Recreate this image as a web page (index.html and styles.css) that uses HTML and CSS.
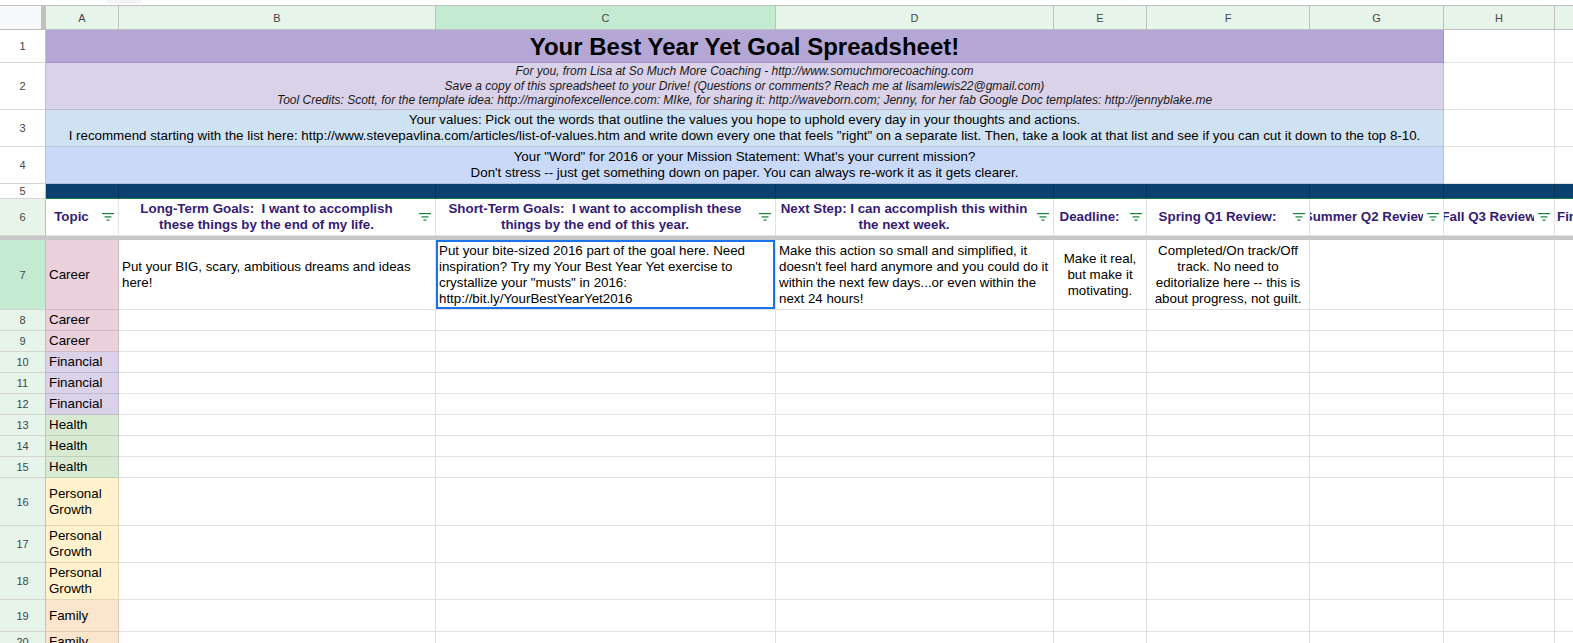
FILE: index.html
```html
<!DOCTYPE html>
<html>
<head>
<meta charset="utf-8">
<link rel="stylesheet" href="styles.css">
</head>
<body>
<div class="topstrip"><div class="tab"></div></div>
<div class="sheet">
  <!-- column headers -->
  <div class="corner"></div>
  <div class="colhdr">A</div>
  <div class="colhdr">B</div>
  <div class="colhdr sel">C</div>
  <div class="colhdr">D</div>
  <div class="colhdr">E</div>
  <div class="colhdr">F</div>
  <div class="colhdr">G</div>
  <div class="colhdr">H</div>
  <div class="colhdr">I</div>

  <!-- row 1 -->
  <div class="rowhdr">1</div>
  <div class="cell merged r1"><span class="title">Your Best Year Yet Goal Spreadsheet!</span></div>
  <div class="cell"></div>
  <div class="cell"></div>

  <!-- row 2 -->
  <div class="rowhdr">2</div>
  <div class="cell merged r2"><span class="small">For you, from Lisa at So Much More Coaching - http://www.somuchmorecoaching.com<br>Save a copy of this spreadsheet to your Drive! (Questions or comments? Reach me at lisamlewis22@gmail.com)<br>Tool Credits: Scott, for the template idea: http://marginofexcellence.com: MIke, for sharing it: http://waveborn.com; Jenny, for her fab Google Doc templates: http://jennyblake.me</span></div>
  <div class="cell"></div>
  <div class="cell"></div>

  <!-- row 3 -->
  <div class="rowhdr">3</div>
  <div class="cell merged r3"><span>Your values: Pick out the words that outline the values you hope to uphold every day in your thoughts and actions.<br>I recommend starting with the list here: http://www.stevepavlina.com/articles/list-of-values.htm and write down every one that feels "right" on a separate list. Then, take a look at that list and see if you can cut it down to the top 8-10.</span></div>
  <div class="cell"></div>
  <div class="cell"></div>

  <!-- row 4 -->
  <div class="rowhdr">4</div>
  <div class="cell merged r4"><span>Your "Word" for 2016 or your Mission Statement: What's your current mission?<br>Don't stress -- just get something down on paper. You can always re-work it as it gets clearer.</span></div>
  <div class="cell"></div>
  <div class="cell"></div>

  <!-- row 5 -->
  <div class="rowhdr">5</div>
  <div class="cell dark"></div>
  <div class="cell dark"></div>
  <div class="cell dark"></div>
  <div class="cell dark"></div>
  <div class="cell dark"></div>
  <div class="cell dark"></div>
  <div class="cell dark"></div>
  <div class="cell dark"></div>
  <div class="cell dark"></div>

  <!-- row 6 -->
  <div class="rowhdr tinted">6</div>
  <div class="cell hdr"><div class="htext"><span>Topic</span></div><span class="filter"><svg width="12" height="8" viewBox="0 0 12 8"><rect x="0" y="0" width="12" height="1.2" fill="#188038"/><rect x="2.5" y="3.3" width="7" height="1.2" fill="#188038"/><rect x="4.5" y="6.5" width="3" height="1.2" fill="#188038"/></svg></span></div>
  <div class="cell hdr"><div class="htext"><span>Long-Term Goals:&nbsp; I want to accomplish<br>these things by the end of my life.</span></div><span class="filter"><svg width="12" height="8" viewBox="0 0 12 8"><rect x="0" y="0" width="12" height="1.2" fill="#188038"/><rect x="2.5" y="3.3" width="7" height="1.2" fill="#188038"/><rect x="4.5" y="6.5" width="3" height="1.2" fill="#188038"/></svg></span></div>
  <div class="cell hdr"><div class="htext"><span>Short-Term Goals:&nbsp; I want to accomplish these<br>things by the end of this year.</span></div><span class="filter"><svg width="12" height="8" viewBox="0 0 12 8"><rect x="0" y="0" width="12" height="1.2" fill="#188038"/><rect x="2.5" y="3.3" width="7" height="1.2" fill="#188038"/><rect x="4.5" y="6.5" width="3" height="1.2" fill="#188038"/></svg></span></div>
  <div class="cell hdr"><div class="htext"><span>Next Step: I can accomplish this within<br>the next week.</span></div><span class="filter"><svg width="12" height="8" viewBox="0 0 12 8"><rect x="0" y="0" width="12" height="1.2" fill="#188038"/><rect x="2.5" y="3.3" width="7" height="1.2" fill="#188038"/><rect x="4.5" y="6.5" width="3" height="1.2" fill="#188038"/></svg></span></div>
  <div class="cell hdr"><div class="htext"><span>Deadline:</span></div><span class="filter"><svg width="12" height="8" viewBox="0 0 12 8"><rect x="0" y="0" width="12" height="1.2" fill="#188038"/><rect x="2.5" y="3.3" width="7" height="1.2" fill="#188038"/><rect x="4.5" y="6.5" width="3" height="1.2" fill="#188038"/></svg></span></div>
  <div class="cell hdr"><div class="htext"><span>Spring Q1 Review:</span></div><span class="filter"><svg width="12" height="8" viewBox="0 0 12 8"><rect x="0" y="0" width="12" height="1.2" fill="#188038"/><rect x="2.5" y="3.3" width="7" height="1.2" fill="#188038"/><rect x="4.5" y="6.5" width="3" height="1.2" fill="#188038"/></svg></span></div>
  <div class="cell hdr"><div class="htext"><span>Summer Q2 Review</span></div><span class="filter"><svg width="12" height="8" viewBox="0 0 12 8"><rect x="0" y="0" width="12" height="1.2" fill="#188038"/><rect x="2.5" y="3.3" width="7" height="1.2" fill="#188038"/><rect x="4.5" y="6.5" width="3" height="1.2" fill="#188038"/></svg></span></div>
  <div class="cell hdr"><div class="htext"><span>Fall Q3 Review</span></div><span class="filter"><svg width="12" height="8" viewBox="0 0 12 8"><rect x="0" y="0" width="12" height="1.2" fill="#188038"/><rect x="2.5" y="3.3" width="7" height="1.2" fill="#188038"/><rect x="4.5" y="6.5" width="3" height="1.2" fill="#188038"/></svg></span></div>
  <div class="cell hdr hleft"><div class="htext"><span>Final Review</span></div></div>

  <!-- freeze bar -->
  <div class="freeze"></div>

  <!-- row 7 -->
  <div class="rowhdr selrow">7</div>
  <div class="cell topic career">Career</div>
  <div class="cell body">Put your BIG, scary, ambitious dreams and ideas<br>here!</div>
  <div class="cell body active">Put your bite-sized 2016 part of the goal here. Need<br>inspiration? Try my Your Best Year Yet exercise to<br>crystallize your "musts" in 2016:<br>http://bit.ly/YourBestYearYet2016</div>
  <div class="cell body">Make this action so small and simplified, it<br>doesn't feel hard anymore and you could do it<br>within the next few days...or even within the<br>next 24 hours!</div>
  <div class="cell body center">Make it real,<br>but make it<br>motivating.</div>
  <div class="cell body center">Completed/On track/Off<br>track. No need to<br>editorialize here -- this is<br>about progress, not guilt.</div>
  <div class="cell"></div>
  <div class="cell"></div>
  <div class="cell"></div>

  <!-- rows 8..20 -->
  <div class="rowhdr tinted">8</div>
  <div class="cell topic career">Career</div>
  <div class="cell"></div><div class="cell"></div><div class="cell"></div><div class="cell"></div><div class="cell"></div><div class="cell"></div><div class="cell"></div><div class="cell"></div>

  <div class="rowhdr tinted">9</div>
  <div class="cell topic career">Career</div>
  <div class="cell"></div><div class="cell"></div><div class="cell"></div><div class="cell"></div><div class="cell"></div><div class="cell"></div><div class="cell"></div><div class="cell"></div>

  <div class="rowhdr tinted">10</div>
  <div class="cell topic financial">Financial</div>
  <div class="cell"></div><div class="cell"></div><div class="cell"></div><div class="cell"></div><div class="cell"></div><div class="cell"></div><div class="cell"></div><div class="cell"></div>

  <div class="rowhdr tinted">11</div>
  <div class="cell topic financial">Financial</div>
  <div class="cell"></div><div class="cell"></div><div class="cell"></div><div class="cell"></div><div class="cell"></div><div class="cell"></div><div class="cell"></div><div class="cell"></div>

  <div class="rowhdr tinted">12</div>
  <div class="cell topic financial">Financial</div>
  <div class="cell"></div><div class="cell"></div><div class="cell"></div><div class="cell"></div><div class="cell"></div><div class="cell"></div><div class="cell"></div><div class="cell"></div>

  <div class="rowhdr tinted">13</div>
  <div class="cell topic health">Health</div>
  <div class="cell"></div><div class="cell"></div><div class="cell"></div><div class="cell"></div><div class="cell"></div><div class="cell"></div><div class="cell"></div><div class="cell"></div>

  <div class="rowhdr tinted">14</div>
  <div class="cell topic health">Health</div>
  <div class="cell"></div><div class="cell"></div><div class="cell"></div><div class="cell"></div><div class="cell"></div><div class="cell"></div><div class="cell"></div><div class="cell"></div>

  <div class="rowhdr tinted">15</div>
  <div class="cell topic health">Health</div>
  <div class="cell"></div><div class="cell"></div><div class="cell"></div><div class="cell"></div><div class="cell"></div><div class="cell"></div><div class="cell"></div><div class="cell"></div>

  <div class="rowhdr tinted">16</div>
  <div class="cell topic growth">Personal<br>Growth</div>
  <div class="cell"></div><div class="cell"></div><div class="cell"></div><div class="cell"></div><div class="cell"></div><div class="cell"></div><div class="cell"></div><div class="cell"></div>

  <div class="rowhdr tinted">17</div>
  <div class="cell topic growth">Personal<br>Growth</div>
  <div class="cell"></div><div class="cell"></div><div class="cell"></div><div class="cell"></div><div class="cell"></div><div class="cell"></div><div class="cell"></div><div class="cell"></div>

  <div class="rowhdr tinted">18</div>
  <div class="cell topic growth">Personal<br>Growth</div>
  <div class="cell"></div><div class="cell"></div><div class="cell"></div><div class="cell"></div><div class="cell"></div><div class="cell"></div><div class="cell"></div><div class="cell"></div>

  <div class="rowhdr tinted">19</div>
  <div class="cell topic family">Family</div>
  <div class="cell"></div><div class="cell"></div><div class="cell"></div><div class="cell"></div><div class="cell"></div><div class="cell"></div><div class="cell"></div><div class="cell"></div>

  <div class="rowhdr tinted">20</div>
  <div class="cell topic family">Family</div>
  <div class="cell"></div><div class="cell"></div><div class="cell"></div><div class="cell"></div><div class="cell"></div><div class="cell"></div><div class="cell"></div><div class="cell"></div>
</div>
</body>
</html>
```

FILE: styles.css
```css
html, body {
  margin: 0;
  padding: 0;
  background: #ffffff;
  overflow: hidden;
  width: 1573px;
  height: 643px;
}

body {
  font-family: "Liberation Sans", Arial, sans-serif;
  color: #000;
}

.topstrip {
  height: 5px;
  display: flex;
}

.tab {
  margin-left: 107px;
  width: 34px;
  height: 4px;
  background: #f3f4f6;
}

.sheet {
  display: grid;
  grid-template-columns: 46px 73px 317px 340px 278px 93px 163px 134px 111px 160px;
  grid-template-rows: 25px 33px 47px 37px 37px 15px 37px 4px 70px repeat(8, 21px) 48px 37px 37px 32px 21px;
  width: 1755px;
}

.sheet > div {
  box-sizing: border-box;
  min-width: 0;
}

.corner {
  background: #f8f9fa;
  border-top: 1px solid #c0c0c0;
  border-bottom: 1px solid #c0c0c0;
  border-right: 5px solid #c0c0c0;
}

.colhdr {
  background: #e6f4ea;
  border-top: 1px solid #c0c0c0;
  border-bottom: 1px solid #c0c0c0;
  border-right: 1px solid #c0c0c0;
  font-size: 11px;
  color: #444746;
  display: flex;
  align-items: center;
  justify-content: center;
}

.colhdr.sel {
  background: #c4ead1;
}

.rowhdr {
  background: #ffffff;
  border-right: 1px solid #c0c0c0;
  border-bottom: 1px solid #d4d4d4;
  font-size: 11px;
  color: #444746;
  display: flex;
  align-items: center;
  justify-content: center;
}

.rowhdr.tinted {
  background: #e6f4ea;
}

.rowhdr.selrow {
  background: #c4ead1;
}

.cell {
  border-right: 1px solid rgba(0, 0, 0, 0.115);
  border-bottom: 1px solid rgba(0, 0, 0, 0.115);
  display: flex;
  align-items: center;
  padding: 0 3px;
  font-size: 13.333px;
  line-height: 16px;
  overflow: hidden;
  white-space: nowrap;
}

.merged {
  grid-column: span 7;
  justify-content: center;
  text-align: center;
}

.r1 { background: #b4a7d6; }
.r2 { background: #d9d2e9; }
.r3 { background: #cfe2f3; }
.r4 { background: #c9daf8; }

.title {
  font-size: 24px;
  font-weight: bold;
  line-height: 28px;
  padding-top: 1px;
}

.small {
  font-size: 12px;
  font-style: italic;
  line-height: 14.6px;
  color: #1a1a1a;
}

.dark {
  background: #0b4170;
  border-right: 1px solid rgba(0, 0, 0, 0.18);
  border-bottom: 1px solid #1d7a45;
}

.hdr {
  padding: 0;
  font-weight: bold;
  color: #351c75;
  background: #fff;
  line-height: 16px;
}

.htext {
  flex: 1 1 0;
  min-width: 0;
  display: flex;
  justify-content: center;
  text-align: center;
  padding: 0 1px 0 0;
}

.hdr.hleft .htext {
  justify-content: flex-start;
  padding-left: 2px;
}

.filter {
  position: relative;
  background: #fff;
  display: flex;
  align-items: center;
  padding: 0 4px 0 4px;
  height: 14px;
}

.filter svg {
  display: block;
}

.freeze {
  grid-column: 1 / -1;
  background: #c7c7c7;
}

.topic {
  white-space: normal;
}

.career { background: #ead1dc; }
.financial { background: #d9d2e9; }
.health { background: #d9ead3; }
.growth { background: #fff2cc; }
.family { background: #fce5cd; }

.body {
  white-space: nowrap;
}

.center {
  justify-content: center;
  text-align: center;
}

.active {
  box-shadow: inset 0 0 0 2px #1a73e8;
}
```
